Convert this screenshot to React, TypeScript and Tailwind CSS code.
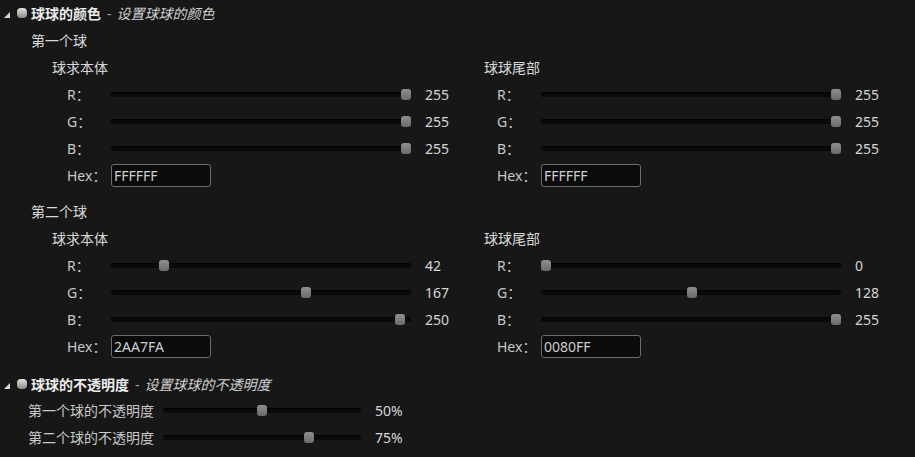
import React from 'react';

const font = { fontFamily: '"Noto Sans", "Noto Sans CJK SC", sans-serif' };

function Slider({ value, max, width }: { value: number; max: number; width: number }) {
  const frac = value / max;
  return (
    <div className="relative h-[12px] flex items-center" style={{ width }}>
      <div className="w-full h-[5px] rounded-full bg-[#0a0a0a] shadow-[inset_0_1px_1px_rgba(0,0,0,0.8)]" />
      <div
        className="absolute top-[0px] w-[10px] h-[11px] rounded-[3px] bg-gradient-to-b from-[#909090] to-[#6a6a6a]"
        style={{ left: frac * (width - 10) }}
      />
    </div>
  );
}

function SectionHeader({ title, desc }: { title: string; desc: string }) {
  return (
    <div className="h-[26px] flex items-center">
      <svg width="6" height="6" viewBox="0 0 6 6" className="ml-[4px] mt-[3px]">
        <polygon points="6,0 6,6 0,6" fill="#d8d8d8" />
      </svg>
      <div className="ml-[7px] w-[10px] h-[10px] rounded-[4px] bg-gradient-to-b from-[#e4e4e4] to-[#8a8a8a]" />
      <span className="ml-[4px] text-[14px] font-bold text-[#ececec]">{title}</span>
      <span className="ml-[6px] text-[14px] text-[#a0a0a0]">-</span>
      <span className="ml-[5px] text-[14px] italic text-[#d0d0d0] font-['Noto_Sans_CJK_SC',sans-serif]">{desc}</span>
    </div>
  );
}

function ColorRow({ label, value }: { label: string; value: number }) {
  return (
    <div className="h-[27px] flex items-center">
      <span className="w-[44px] text-[14px] text-[#c8c8c8]">{label}</span>
      <Slider value={value} max={255} width={300} />
      <span className="ml-[14px] text-[14px] text-[#d6d6d6]">{value}</span>
    </div>
  );
}

function ColorBlock({ title, rgb, hex, shift }: { title: string; rgb: [number, number, number]; hex: string; shift?: boolean }) {
  return (
    <div>
      <div className={`h-[27px] flex items-center text-[14px] text-[#d8d8d8] ${shift ? 'pl-[2px]' : ''}`}>{title}</div>
      <div className="ml-[15px]">
        <ColorRow label="R：" value={rgb[0]} />
        <ColorRow label="G：" value={rgb[1]} />
        <ColorRow label="B：" value={rgb[2]} />
        <div className="h-[27px] flex items-center">
          <span className="w-[44px] text-[14px] text-[#c8c8c8]">Hex：</span>
          <div className="w-[100px] h-[23px] rounded-[3px] border border-[#6e6e6e] bg-[#0b0b0b] flex items-center px-[2px] text-[14px] text-[#cfcfcf]">
            {hex}
          </div>
        </div>
      </div>
    </div>
  );
}

function Ball({ name, body, tail }: { name: string; body: [[number, number, number], string]; tail: [[number, number, number], string] }) {
  return (
    <div>
      <div className="h-[28px] flex items-center pl-[31px] text-[14px] text-[#d8d8d8]">{name}</div>
      <div className="grid grid-cols-[430px_1fr] pl-[52px]">
        <ColorBlock title="球求本体" rgb={body[0]} hex={body[1]} />
        <ColorBlock title="球球尾部" rgb={tail[0]} hex={tail[1]} shift />
      </div>
    </div>
  );
}

function OpacityRow({ label, value }: { label: string; value: number }) {
  return (
    <div className="h-[27px] flex items-center pl-[28px]">
      <span className="w-[135px] text-[14px] text-[#c8c8c8]">{label}</span>
      <Slider value={value} max={100} width={198} />
      <span className="ml-[14px] text-[14px] text-[#d6d6d6]">{value}%</span>
    </div>
  );
}

export default function App() {
  return (
    <div className="w-[915px] h-[457px] bg-[#171717] overflow-hidden" style={font}>
      <SectionHeader title="球球的颜色" desc="设置球球的颜色" />
      <Ball name="第一个球" body={[[255, 255, 255], 'FFFFFF']} tail={[[255, 255, 255], 'FFFFFF']} />
      <div className="mt-[8px]">
        <Ball name="第二个球" body={[[42, 167, 250], '2AA7FA']} tail={[[0, 128, 255], '0080FF']} />
      </div>
      <div className="mt-[11px]">
        <SectionHeader title="球球的不透明度" desc="设置球球的不透明度" />
        <OpacityRow label="第一个球的不透明度" value={50} />
        <OpacityRow label="第二个球的不透明度" value={75} />
      </div>
    </div>
  );
}
